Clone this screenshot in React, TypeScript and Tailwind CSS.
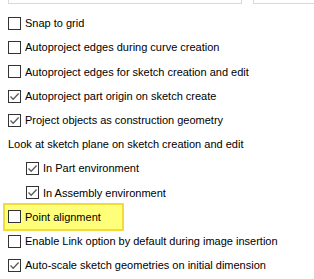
import React from 'react'

type Item = {
  label: string
  checked?: boolean
  indent?: boolean
  plain?: boolean
  highlight?: boolean
}

const items: Item[] = [
  { label: 'Snap to grid' },
  { label: 'Autoproject edges during curve creation' },
  { label: 'Autoproject edges for sketch creation and edit' },
  { label: 'Autoproject part origin on sketch create', checked: true },
  { label: 'Project objects as construction geometry', checked: true },
  { label: 'Look at sketch plane on sketch creation and edit', plain: true },
  { label: 'In Part environment', checked: true, indent: true },
  { label: 'In Assembly environment', checked: true, indent: true },
  { label: 'Point alignment', highlight: true },
  { label: 'Enable Link option by default during image insertion' },
  { label: 'Auto-scale sketch geometries on initial dimension', checked: true },
]

function Box({ checked }: { checked?: boolean }) {
  return (
    <span className="w-[13px] h-[13px] shrink-0 border border-[#333333] bg-white flex items-center justify-center">
      {checked && (
        <svg width="11" height="11" viewBox="0 0 11 11">
          <path d="M1.5 5.5 L4.2 8.3 L9.6 2.5" fill="none" stroke="#5c5c5c" strokeWidth="1.3" />
        </svg>
      )}
    </span>
  )
}

function Row({ item }: { item: Item }) {
  if (item.plain) {
    return (
      <div className="h-[24.2px] flex items-center pl-[8px]">
        <span className="whitespace-nowrap">{item.label}</span>
      </div>
    )
  }

  const content = (
    <>
      <Box checked={item.checked} />
      <span className="ml-[4px] whitespace-nowrap">{item.label}</span>
    </>
  )

  return (
    <div className={`h-[24.2px] flex items-center ${item.indent ? 'pl-[26px]' : 'pl-[8px]'}`}>
      {item.highlight ? (
        <div className="h-[28px] w-[121px] -ml-[5px] pl-[3px] shrink-0 flex items-center border-2 border-[#f2dc3c] bg-[#ffff7a]">
          {content}
        </div>
      ) : (
        content
      )}
    </div>
  )
}

export default function App() {
  return (
    <div
      className="w-[314px] h-[279px] bg-white overflow-hidden text-[11px] text-black"
      style={{ fontFamily: '"Liberation Sans", Arial, sans-serif' }}
    >
      {/* cut-off fields above */}
      <div className="flex h-[4px]">
        <div className="ml-[8px] w-[234px] border-x border-b border-[#d9d9d9]" />
        <div className="ml-[11px] flex-1 border-l border-b border-[#d9d9d9]" />
      </div>

      <div className="pt-[7.4px]">
        {items.map((item) => (
          <Row key={item.label} item={item} />
        ))}
      </div>
    </div>
  )
}
